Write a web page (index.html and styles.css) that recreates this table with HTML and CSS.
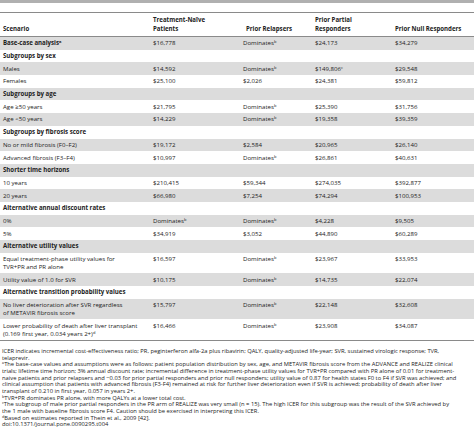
FILE: index.html
```html
<!DOCTYPE html>
<html lang="en">
<head>
<meta charset="utf-8">
<title>Table 4</title>
<link rel="stylesheet" href="styles.css">
</head>
<body>
<div class="page">
  <div class="topbar"></div>
  <table class="tbl">
    <colgroup>
      <col class="c1"><col class="c2"><col class="c3"><col class="c4"><col class="c5">
    </colgroup>
    <thead>
      <tr>
        <th>Scenario</th>
        <th>Treatment-Naïve<br>Patients</th>
        <th class="hrel">Prior Relapsers</th>
        <th>Prior Partial<br>Responders</th>
        <th>Prior Null Responders</th>
      </tr>
    </thead>
    <tbody>
      <tr><td class="sec">Base-case analysis<sup class="fn">a</sup></td><td>$16,778</td><td>Dominates<sup class="fn">b</sup></td><td>$24,173</td><td>$34,279</td></tr>
      <tr><td class="sec">Subgroups by sex</td><td></td><td></td><td></td><td></td></tr>
      <tr><td>Males</td><td>$14,592</td><td>Dominates<sup class="fn">b</sup></td><td>$149,806<sup class="fn">c</sup></td><td>$29,548</td></tr>
      <tr><td>Females</td><td>$25,100</td><td>$2,026</td><td>$24,381</td><td>$59,812</td></tr>
      <tr><td class="sec">Subgroups by age</td><td></td><td></td><td></td><td></td></tr>
      <tr><td>Age ≥50 years</td><td>$21,795</td><td>Dominates<sup class="fn">b</sup></td><td>$25,390</td><td>$31,756</td></tr>
      <tr><td>Age &lt;50 years</td><td>$14,229</td><td>Dominates<sup class="fn">b</sup></td><td>$19,358</td><td>$39,359</td></tr>
      <tr><td class="sec">Subgroups by fibrosis score</td><td></td><td></td><td></td><td></td></tr>
      <tr><td>No or mild fibrosis (F0–F2)</td><td>$19,172</td><td>$2,584</td><td>$20,965</td><td>$26,140</td></tr>
      <tr><td>Advanced fibrosis (F3–F4)</td><td>$10,997</td><td>Dominates<sup class="fn">b</sup></td><td>$26,861</td><td>$40,631</td></tr>
      <tr><td class="sec">Shorter time horizons</td><td></td><td></td><td></td><td></td></tr>
      <tr><td>10 years</td><td>$210,415</td><td>$59,344</td><td>$274,035</td><td>$392,877</td></tr>
      <tr><td>20 years</td><td>$66,980</td><td>$7,254</td><td>$74,294</td><td>$100,953</td></tr>
      <tr><td class="sec">Alternative annual discount rates</td><td></td><td></td><td></td><td></td></tr>
      <tr><td>0%</td><td>Dominates<sup class="fn">b</sup></td><td>Dominates<sup class="fn">b</sup></td><td>$4,228</td><td>$9,505</td></tr>
      <tr><td>5%</td><td>$34,919</td><td>$3,052</td><td>$44,890</td><td>$60,289</td></tr>
      <tr><td class="sec">Alternative utility values</td><td></td><td></td><td></td><td></td></tr>
      <tr><td>Equal treatment-phase utility values for<br>TVR+PR and PR alone</td><td>$16,597</td><td>Dominates<sup class="fn">b</sup></td><td>$23,967</td><td>$33,953</td></tr>
      <tr><td>Utility value of 1.0 for SVR</td><td>$10,175</td><td>Dominates<sup class="fn">b</sup></td><td>$14,735</td><td>$22,074</td></tr>
      <tr><td class="sec">Alternative transition probability values</td><td></td><td></td><td></td><td></td></tr>
      <tr><td>No liver deterioration after SVR regardless<br>of METAVIR fibrosis score</td><td>$15,797</td><td>Dominates<sup class="fn">b</sup></td><td>$22,148</td><td>$32,608</td></tr>
      <tr><td>Lower probability of death after liver transplant<br>(0.169 first year, 0.034 years 2+)<sup class="fn">d</sup></td><td>$16,466</td><td>Dominates<sup class="fn">b</sup></td><td>$23,908</td><td>$34,087</td></tr>
    </tbody>
  </table>
  <div class="notes">
    <p class="note">ICER indicates incremental cost-effectiveness ratio; PR, peginterferon alfa-2a plus ribavirin; QALY, quality-adjusted life-year; SVR, sustained virologic response; TVR,<br>telaprevir.</p>
    <p class="note"><sup class="fn">a</sup>The base-case values and assumptions were as follows: patient population distribution by sex, age, and METAVIR fibrosis score from the ADVANCE and REALIZE clinical<br>trials; lifetime time horizon; 3% annual discount rate; incremental difference in treatment-phase utility values for TVR+PR compared with PR alone of 0.01 for treatment-<br>naive patients and prior relapsers and −0.03 for prior partial responders and prior null responders; utility value of 0.87 for health states F0 to F4 if SVR was achieved; and<br>clinical assumption that patients with advanced fibrosis (F3-F4) remained at risk for further liver deterioration even if SVR is achieved; probability of death after liver<br>transplant of 0.210 in first year, 0.057 in years 2+.</p>
    <p class="note"><sup class="fn">b</sup>TVR+PR dominates PR alone, with more QALYs at a lower total cost.</p>
    <p class="note"><sup class="fn">c</sup>The subgroup of male prior partial responders in the PR arm of REALIZE was very small (n = 15). The high ICER for this subgroup was the result of the SVR achieved by<br>the 1 male with baseline fibrosis score F4. Caution should be exercised in interpreting this ICER.</p>
    <p class="note"><sup class="fn">d</sup>Based on estimates reported in Thein et al., 2009 [42].</p>
    <p class="note">doi:10.1371/journal.pone.0090295.t004</p>
  </div>
</div>
</body>
</html>
```

FILE: styles.css
```css
html, body {
  margin: 0;
  padding: 0;
  background: #ffffff;
}

.page {
  width: 474px;
  overflow: hidden;
  font-family: "Open Sans", "Noto Sans", sans-serif;
  font-size: 6.1px;
  color: #222222;
}

.topbar {
  height: 3px;
  background: #b0b0b0;
  margin-bottom: 9px;
}

.tbl {
  width: 474px;
  table-layout: fixed;
  border-collapse: collapse;
  border-top: 1px solid #8a8a8a;
  border-bottom: 1px solid #8a8a8a;
}

.c1 { width: 150px; }
.c2 { width: 90px; }
.c3 { width: 72px; }
.c4 { width: 80px; }
.c5 { width: 82px; }

.tbl th {
  font-weight: 700;
  text-align: left;
  vertical-align: bottom;
  line-height: 8.5px;
  padding: 3px 0 3px 3px;
  border-bottom: 1px solid #8a8a8a;
  white-space: nowrap;
}

.tbl th.hrel {
  padding-left: 6px;
}

.tbl td {
  text-align: left;
  vertical-align: top;
  line-height: 8px;
  padding: 2.35px 0 2.35px 3px;
  white-space: nowrap;
}

.tbl tbody tr:nth-child(odd) {
  background: #dcdcdc;
}

.tbl td.sec {
  font-weight: 700;
}

.fn {
  font-size: 4px;
  line-height: 0;
  vertical-align: 2px;
}

.notes {
  padding: 7px 0 0 2px;
  font-size: 5.8px;
}

.notes .fn {
  font-size: 3.8px;
}

.note {
  margin: 0;
  line-height: 6.65px;
  white-space: nowrap;
}
```
